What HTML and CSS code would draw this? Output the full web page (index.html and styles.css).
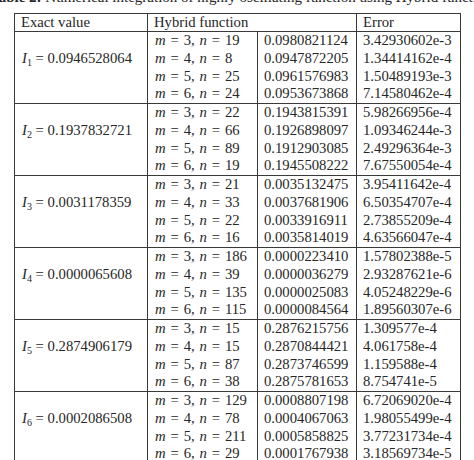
FILE: index.html
```html
<!DOCTYPE html>
<html>
<head>
<meta charset="utf-8">
<link rel="stylesheet" href="styles.css">
</head>
<body>
<p class="caption"><b>Table 2:</b> Numerical integration of highly oscillating function using Hybrid functions</p>
<table class="results">
<colgroup><col class="c-exact"><col class="c-mn"><col class="c-val"><col class="c-err"></colgroup>
<thead>
<tr><th>Exact value</th><th colspan="2">Hybrid function</th><th class="last">Error</th></tr>
</thead>
<tbody>
<tr class="first"><td class="exact" rowspan="4"><i>I</i><sub>1</sub> = 0.0946528064</td><td class="mn"><i>m</i> = 3, <i>n</i> = 19</td><td>0.0980821124</td><td class="last">3.42930602e-3</td></tr>
<tr><td class="mn"><i>m</i> = 4, <i>n</i> = 8</td><td>0.0947872205</td><td class="last">1.34414162e-4</td></tr>
<tr><td class="mn"><i>m</i> = 5, <i>n</i> = 25</td><td>0.0961576983</td><td class="last">1.50489193e-3</td></tr>
<tr><td class="mn"><i>m</i> = 6, <i>n</i> = 24</td><td>0.0953673868</td><td class="last">7.14580462e-4</td></tr>

<tr class="first"><td class="exact" rowspan="4"><i>I</i><sub>2</sub> = 0.1937832721</td><td class="mn"><i>m</i> = 3, <i>n</i> = 22</td><td>0.1943815391</td><td class="last">5.98266956e-4</td></tr>
<tr><td class="mn"><i>m</i> = 4, <i>n</i> = 66</td><td>0.1926898097</td><td class="last">1.09346244e-3</td></tr>
<tr><td class="mn"><i>m</i> = 5, <i>n</i> = 89</td><td>0.1912903085</td><td class="last">2.49296364e-3</td></tr>
<tr><td class="mn"><i>m</i> = 6, <i>n</i> = 19</td><td>0.1945508222</td><td class="last">7.67550054e-4</td></tr>

<tr class="first"><td class="exact" rowspan="4"><i>I</i><sub>3</sub> = 0.0031178359</td><td class="mn"><i>m</i> = 3, <i>n</i> = 21</td><td>0.0035132475</td><td class="last">3.95411642e-4</td></tr>
<tr><td class="mn"><i>m</i> = 4, <i>n</i> = 33</td><td>0.0037681906</td><td class="last">6.50354707e-4</td></tr>
<tr><td class="mn"><i>m</i> = 5, <i>n</i> = 22</td><td>0.0033916911</td><td class="last">2.73855209e-4</td></tr>
<tr><td class="mn"><i>m</i> = 6, <i>n</i> = 16</td><td>0.0035814019</td><td class="last">4.63566047e-4</td></tr>

<tr class="first"><td class="exact" rowspan="4"><i>I</i><sub>4</sub> = 0.0000065608</td><td class="mn"><i>m</i> = 3, <i>n</i> = 186</td><td>0.0000223410</td><td class="last">1.57802388e-5</td></tr>
<tr><td class="mn"><i>m</i> = 4, <i>n</i> = 39</td><td>0.0000036279</td><td class="last">2.93287621e-6</td></tr>
<tr><td class="mn"><i>m</i> = 5, <i>n</i> = 135</td><td>0.0000025083</td><td class="last">4.05248229e-6</td></tr>
<tr><td class="mn"><i>m</i> = 6, <i>n</i> = 115</td><td>0.0000084564</td><td class="last">1.89560307e-6</td></tr>

<tr class="first"><td class="exact" rowspan="4"><i>I</i><sub>5</sub> = 0.2874906179</td><td class="mn"><i>m</i> = 3, <i>n</i> = 15</td><td>0.2876215756</td><td class="last">1.309577e-4</td></tr>
<tr><td class="mn"><i>m</i> = 4, <i>n</i> = 15</td><td>0.2870844421</td><td class="last">4.061758e-4</td></tr>
<tr><td class="mn"><i>m</i> = 5, <i>n</i> = 87</td><td>0.2873746599</td><td class="last">1.159588e-4</td></tr>
<tr><td class="mn"><i>m</i> = 6, <i>n</i> = 38</td><td>0.2875781653</td><td class="last">8.754741e-5</td></tr>

<tr class="first"><td class="exact" rowspan="4"><i>I</i><sub>6</sub> = 0.0002086508</td><td class="mn"><i>m</i> = 3, <i>n</i> = 129</td><td>0.0008807198</td><td class="last">6.72069020e-4</td></tr>
<tr><td class="mn"><i>m</i> = 4, <i>n</i> = 78</td><td>0.0004067063</td><td class="last">1.98055499e-4</td></tr>
<tr><td class="mn"><i>m</i> = 5, <i>n</i> = 211</td><td>0.0005858825</td><td class="last">3.77231734e-4</td></tr>
<tr><td class="mn"><i>m</i> = 6, <i>n</i> = 29</td><td>0.0001767938</td><td class="last">3.18569734e-5</td></tr>
</tbody>
</table>
</body>
</html>
```
FILE: styles.css
```css
html, body {
  margin: 0;
  padding: 0;
  background: #fff;
}
body {
  font-family: "Liberation Serif", "Times New Roman", serif;
  font-size: 14.7px;
  color: #262626;
}
.caption {
  margin: -12px 0 0 -10px;
  font-size: 15px;
  line-height: 18px;
  white-space: nowrap;
}
.results {
  margin: 7px 0 0 14px;
  border-collapse: separate;
  border-spacing: 0;
  table-layout: fixed;
  width: 447px;
}
.c-exact { width: 133px; }
.c-mn { width: 110px; }
.c-val { width: 99px; }
.c-err { width: 105px; }
.results th,
.results td {
  padding: 0 0 0 6px;
  line-height: 17.75px;
  text-align: left;
  font-weight: normal;
  white-space: nowrap;
  vertical-align: middle;
  border-left: 1px solid #3a3a3a;
}
.results th {
  line-height: 17px;
  border-top: 1px solid #3a3a3a;
}
.results .last {
  border-right: 1px solid #3a3a3a;
}
.results tr.first td {
  border-top: 1px solid #3a3a3a;
}
.results td.mn {
  padding-left: 7px;
  word-spacing: 1.2px;
}
.results td.exact {
  vertical-align: top;
  padding-top: 17.75px;
  padding-left: 7px;
}
.results sub {
  font-size: 10px;
  line-height: 0;
  vertical-align: -3px;
}
```
